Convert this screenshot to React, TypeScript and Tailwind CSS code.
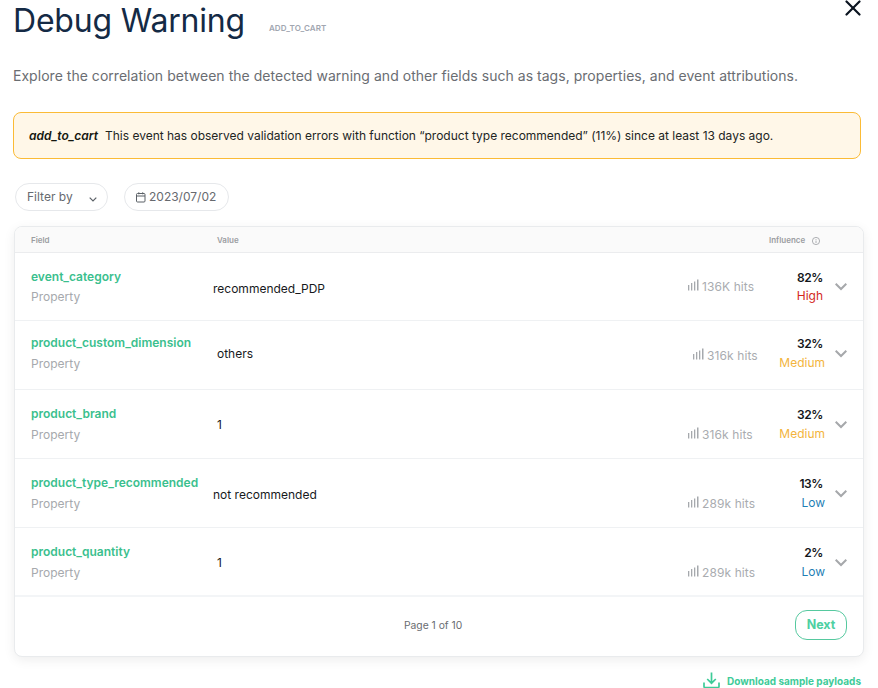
import React from 'react';
import { X } from 'lucide-react';

interface Row {
  field: string;
  value: string;
  hits: string;
  influence: string;
  level: 'High' | 'Medium' | 'Low';
  rowClass: string;
  fieldClass: string;
  typeClass: string;
  valueClass: string;
  hitsClass: string;
  scoreClass: string;
  levelClass: string;
  chevronClass: string;
}

const rows: Row[] = [
  {
    field: 'event_category',
    value: 'recommended_PDP',
    hits: '136K hits',
    influence: '82%',
    level: 'High',
    rowClass: 'h-[68px] border-b border-[#eff1f3]',
    fieldClass: 'pt-4',
    typeClass: 'mt-1',
    valueClass: 'pl-[12px] pt-[28px]',
    hitsClass: 'pt-[26px]',
    scoreClass: 'pt-[17px]',
    levelClass: 'mt-[2px] mr-[2px] text-[#d3291c]',
    chevronClass: 'pt-[30px]',
  },
  {
    field: 'product_custom_dimension',
    value: 'others',
    hits: '316k hits',
    influence: '32%',
    level: 'Medium',
    rowClass: 'h-[69px] border-b border-[#eff1f3]',
    fieldClass: 'pt-[14px]',
    typeClass: 'mt-[5px]',
    valueClass: 'pl-4 pt-[25px]',
    hitsClass: 'pl-[5px] pt-[27px]',
    scoreClass: 'pt-[15px]',
    levelClass: 'mt-[3px] text-[#f3b43c]',
    chevronClass: 'pt-[29px]',
  },
  {
    field: 'product_brand',
    value: '1',
    hits: '316k hits',
    influence: '32%',
    level: 'Medium',
    rowClass: 'h-[69px] border-b border-[#eff1f3]',
    fieldClass: 'pt-4',
    typeClass: 'mt-[5px]',
    valueClass: 'pl-4 pt-[27px]',
    hitsClass: 'pt-[37px]',
    scoreClass: 'pt-[17px]',
    levelClass: 'mt-[3px] text-[#f3b43c]',
    chevronClass: 'pt-[31px]',
  },
  {
    field: 'product_type_recommended',
    value: 'not recommended',
    hits: '289k hits',
    influence: '13%',
    level: 'Low',
    rowClass: 'h-[69px] border-b border-[#eff1f3]',
    fieldClass: 'pt-4',
    typeClass: 'mt-[5px]',
    valueClass: 'pl-[12px] pt-[28px]',
    hitsClass: 'pt-[37px]',
    scoreClass: 'pt-[17px]',
    levelClass: 'mt-[3px] text-[#1f7fb5]',
    chevronClass: 'pt-[31px]',
  },
  {
    field: 'product_quantity',
    value: '1',
    hits: '289k hits',
    influence: '2%',
    level: 'Low',
    rowClass: 'h-[69px] border-b-2 border-[#f3f5f7]',
    fieldClass: 'pt-4',
    typeClass: 'mt-[5px]',
    valueClass: 'pl-4 pt-[27px]',
    hitsClass: 'pt-[37px]',
    scoreClass: 'pt-[17px]',
    levelClass: 'mt-[3px] text-[#1f7fb5]',
    chevronClass: 'pt-[31px]',
  },
];

const CalendarIcon = () => (
  <svg width="10" height="11" viewBox="0 0 10 11" fill="none" stroke="#5b6167">
    <rect x="0.5" y="1.5" width="8.5" height="8.5" rx="1" />
    <path d="M0.5 4H9M2.8 0.3V2.3M6.7 0.3V2.3" />
  </svg>
);

const InfoIcon = () => (
  <svg className="mt-[2px]" width="8" height="8" viewBox="0 0 8 8" fill="none" stroke="#9a9da1" strokeWidth="0.8">
    <circle cx="4" cy="4" r="3.6" />
    <path d="M4 3.6V6M4 2V2.8" />
  </svg>
);

// Signal strength bars next to the hit count
const BarsIcon = () => (
  <svg width="11" height="12" viewBox="0 0 11 12" fill="#a6a9ad">
    <rect x="0" y="6" width="1.3" height="5.5" />
    <rect x="3" y="4" width="1.3" height="7.5" />
    <rect x="6" y="2.5" width="1.3" height="9" />
    <rect x="9" y="0.5" width="1.5" height="11" />
  </svg>
);

const RowChevron = () => (
  <svg width="12" height="8" viewBox="0 0 12 8" fill="none" stroke="#a6a8ab" strokeWidth="2">
    <path d="M0.7 0.8L6 6L11.3 0.8" />
  </svg>
);

const DownloadIcon = () => (
  <svg className="-mt-[2px]" width="17" height="17" viewBox="0 0 17 17" fill="none" stroke="#3ecb98" strokeWidth="1.7">
    <path d="M8.5 0.5V11M4.2 7L8.5 11.2L12.8 7" />
    <path d="M1 10.5V14.5Q1 15.7 2.2 15.7H14.8Q16 15.7 16 14.5V10.5" />
  </svg>
);

const TableRow: React.FC<{ row: Row }> = ({ row }) => (
  <div className={`flex pl-4 text-[12px] leading-4 ${row.rowClass}`}>
    <div className={`w-[170px] shrink-0 ${row.fieldClass}`}>
      <div className="whitespace-nowrap font-semibold text-[#3bbf8e]">{row.field}</div>
      <div className={`text-[#a6a9ad] ${row.typeClass}`}>Property</div>
    </div>
    <div className={`w-[487px] shrink-0 text-[#17191c] ${row.valueClass}`}>{row.value}</div>
    <div className={`flex w-[83px] shrink-0 items-start gap-[3px] whitespace-nowrap text-[#a9acb0] ${row.hitsClass}`}>
      <BarsIcon />
      <span className="tracking-[0.1px]">{row.hits}</span>
    </div>
    <div className={`flex w-[54px] shrink-0 flex-col items-end ${row.scoreClass}`}>
      <div className="mr-[2px] font-semibold tracking-[-0.4px] text-[#14171a]">{row.influence}</div>
      <div className={row.levelClass}>{row.level}</div>
    </div>
    <div className={`pl-[10px] ${row.chevronClass}`}>
      <RowChevron />
    </div>
  </div>
);

const App: React.FC = () => {
  return (
    <div className="h-[688px] w-[878px] overflow-hidden bg-white pl-[13px] font-['Inter','Liberation_Sans',sans-serif]">
      {/* Title */}
      <header className="flex h-[60px]">
        <h1 className="w-[256px] pt-px text-[32px] leading-10 tracking-[-0.2px] text-[#142a45]">Debug Warning</h1>
        <span className="pt-[22px] text-[8px] font-semibold leading-3 tracking-[0.05px] text-[#a1a6b0]">ADD_TO_CART</span>
        <X size={26} strokeWidth={2} className="ml-auto mr-3 -mt-[5px] text-[#0b1420]" />
      </header>

      <p className="h-[52px] pt-[6px] text-[14px] leading-5 tracking-[0.03px] text-[#6a6d72]">
        Explore the correlation between the detected warning and other fields such as tags, properties, and event attributions.
      </p>

      {/* Warning banner */}
      <section className="flex h-[47px] w-[848px] items-center rounded-lg border border-[#fbbb36] bg-[#fff7e8] pl-[15px] text-[12px] text-[#22251f]">
        <span className="w-[76px] font-semibold italic text-[#14160f]">add_to_cart</span>
        <span className="tracking-[-0.01px]">This event has observed validation errors with function “product type recommended” (11%) since at least 13 days ago.</span>
      </section>

      {/* Filters */}
      <div className="mt-6 flex gap-4 pl-[2px] text-[12px] text-[#676a6f]">
        <button className="flex h-7 w-[93px] items-center rounded-full border border-[#e6e8eb] pl-[11px]">
          Filter by
          <svg className="ml-4 mt-1" width="8" height="5" viewBox="0 0 8 5" fill="none" stroke="#5b6167" strokeWidth="1.2">
            <path d="M0.7 0.7L4 4L7.3 0.7" />
          </svg>
        </button>
        <button className="flex h-7 w-[105px] items-center gap-[3px] rounded-full border border-[#e6e8eb] pl-[11px]">
          <CalendarIcon />
          2023/07/02
        </button>
      </div>

      {/* Correlation table */}
      <section className="ml-px mt-[15px] h-[431px] w-[850px] overflow-hidden rounded-lg border border-[#e9ebed] bg-white shadow-[0_3px_12px_rgba(0,0,0,0.07)]">
        <div className="flex h-[26px] items-center border-b border-[#ebecee] bg-[#fafafa] pl-4 text-[8px] font-semibold text-[#9b9da1]">
          <span className="w-[186px]">Field</span>
          <span className="w-[552px]">Value</span>
          <span className="w-[43px]">Influence</span>
          <InfoIcon />
        </div>
        {rows.map(row => (
          <TableRow key={row.field} row={row} />
        ))}
        <div className="flex h-14 items-center pl-[389px] pr-4">
          <span className="pt-[2px] text-[10.3px] text-[#696c70]">Page 1 of 10</span>
          <button className="ml-auto h-[30px] w-[52px] rounded-xl border border-[#56c99f] text-[12.5px] font-bold text-[#4fd0a2]">Next</button>
        </div>
      </section>

      <a className="mt-[14px] flex w-[848px] items-center justify-end gap-[7px] text-[10px] font-bold leading-5 text-[#3ecb98]">
        <DownloadIcon />
        Download sample payloads
      </a>
    </div>
  );
};

export default App;
